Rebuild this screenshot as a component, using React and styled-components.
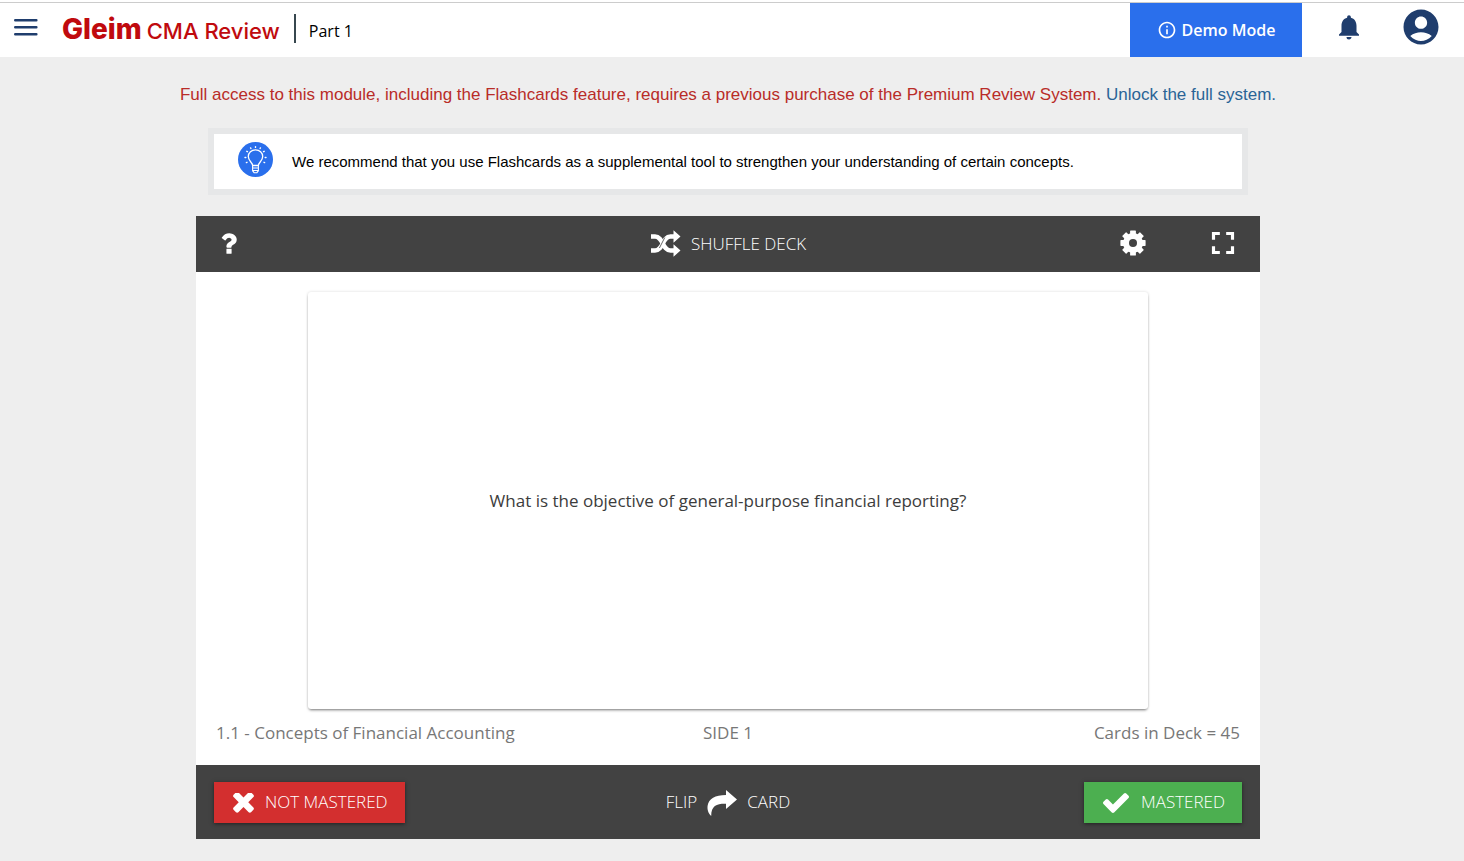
import React from 'react';
import styled, { createGlobalStyle } from 'styled-components';
import { MdNotifications, MdAccountCircle, MdInfoOutline, MdFullscreen } from 'react-icons/md';

const NAVY = '#1f3d6d';

const MenuIcon = () => (
    <svg width="24" height="18" viewBox="0 0 24 18" stroke={NAVY} strokeWidth="2.4" strokeLinecap="round">
        <path d="M1.2 2.2h21.200M1.2 9.2h21.200M1.2 16.2h21.200" />
    </svg>
);

const BulbIcon = () => (
    <svg width="35" height="35" viewBox="0 0 35 35" fill="none" stroke="#fff" strokeLinecap="round">
        <circle cx="17.5" cy="17.5" r="17.5" fill="#2a6fec" stroke="none" />
        <path d="M14.6 23.5c0-3-4.3-4.4-4.3-9 0-4 3.2-6.7 7.2-6.7s7.2 2.7 7.2 6.7c0 4.6-4.3 6-4.3 9z" strokeWidth="1.3" strokeLinejoin="round" />
        <path d="M14.6 23.5v5.2l1.5 2h2.8l1.5-2v-5.2M14.6 26h5.8M14.6 28.5h5.8" strokeWidth="1.1" />
        <path d="M17.5 4.6v.8M12.6 5.9l.3.6M22.4 5.9l-.3.6M8.8 9.3l.6.4M26.2 9.3l-.6.4M7 15.5h.8M27.2 15.5h.8M8.4 20.6l.6-.3M26.6 20.6l-.6-.3" strokeWidth="1.4" />
    </svg>
);

const QuestionIcon = () => (
    <svg width="29" height="29" viewBox="0 0 1792 1792" fill="#fff">
        <path d="M1088 1256v240q0 16-12 28t-28 12h-240q-16 0-28-12t-12-28v-240q0-16 12-28t28-12h240q16 0 28 12t12 28zm316-600q0 54-15.5 101t-35 76.5-55 59.5-57.5 43.5-61 35.5q-41 23-68.5 65t-27.5 67q0 17-12 32.5t-28 15.5h-240q-15 0-25.5-18.5t-10.5-37.5v-45q0-83 65-156.5t143-108.5q59-27 84-56t25-76q0-42-46.5-74t-107.5-32q-65 0-108 29-35 25-107 115-13 16-31 16-12 0-25-8l-164-125q-13-10-15.5-25t5.5-28q160-266 464-266 80 0 161 31t146 83 106 127.5 41 158.5z" />
    </svg>
);

const ShuffleIcon = () => (
    <svg width="31" height="27" viewBox="0 0 31 27" fill="none" stroke="#fff" strokeWidth="4.4">
        <path d="M1 20.500h4c8.500 0 7-14 15.500-14H25" />
        <path d="M1 6.500h4c8.500 0 7 14 15.500 14H25" />
        <path d="M23.500 0.200L30.500 6.500 23.500 12.800zM23.500 14.200L30.500 20.500 23.500 26.800z" fill="#fff" stroke="none" />
        <path d="M14.800 7.500L9.400 18" stroke="#424242" strokeWidth="0.800" />
    </svg>
);

const GearIcon = () => (
    <svg width="26" height="26" viewBox="-13 -13 26 26" fill="#fff">
        {[0, 45, 90, 135].map((angle) => (
            <rect key={angle} x="-2.9" y="-12.6" width="5.8" height="25.2" rx="0.6" transform={`rotate(${angle})`} />
        ))}
        <circle r="10" />
        <circle r="4" fill="#424242" />
    </svg>
);

const FlipIcon = () => (
    <svg width="30" height="26" viewBox="0 0 30 26" fill="#fff">
        <path d="M19 0L30 9.5 19 19V13.8C10 13.6 4.2 15.5 4.2 26 .8 22.8 .2 19 .6 15.8 1.8 8.5 8 4.9 19 4.9z" />
    </svg>
);

const CrossIcon = () => (
    <svg width="21" height="21" viewBox="296 304 1200 1200" fill="#fff">
        <path d="M1490 1194q0 40-28 68l-136 136q-28 28-68 28t-68-28l-294-294-294 294q-28 28-68 28t-68-28l-136-136q-28-28-28-68t28-68l294-294-294-294q-28-28-28-68t28-68l136-136q28-28 68-28t68 28l294 294 294-294q28-28 68-28t68 28l136 136q28 28 28 68t-28 68l-294 294 294 294q28 28 28 68z" />
    </svg>
);

const CheckIcon = () => (
    <svg width="26" height="20" viewBox="121 334 1550 1190" fill="#fff">
        <path d="M1671 566q0 40-28 68l-724 724-136 136q-28 28-68 28t-68-28l-136-136-362-362q-28-28-28-68t28-68l136-136q28-28 68-28t68 28l294 295 656-657q28-28 68-28t68 28l136 136q28 28 28 68z" />
    </svg>
);

export default function App() {
    return (
        <>
            <GlobalStyle />
            <Header>
                <HeaderButton aria-label="Menu"><MenuIcon /></HeaderButton>
                <Logo href="#">
                    <LogoName>Gleim</LogoName>
                    <LogoCourse>CMA Review</LogoCourse>
                </Logo>
                <PartName>Part 1</PartName>
                <DemoButton><MdInfoOutline size={20} />Demo Mode</DemoButton>
                <HeaderActions>
                    <HeaderButton aria-label="Notifications"><MdNotifications size={30} /></HeaderButton>
                    <HeaderButton aria-label="Account"><MdAccountCircle size={42} /></HeaderButton>
                </HeaderActions>
            </Header>
            <Main>
                <AccessNote>
                    Full access to this module, including the Flashcards feature, requires a previous purchase of the Premium Review System.
                    {' '}<a href="#">Unlock the full system.</a>
                </AccessNote>
                <Tip>
                    <BulbIcon />
                    <p>We recommend that you use Flashcards as a supplemental tool to strengthen your understanding of certain concepts.</p>
                </Tip>
                <Deck>
                    <Toolbar>
                        <ToolGroup>
                            <IconButton aria-label="Help"><QuestionIcon /></IconButton>
                        </ToolGroup>
                        <BarButton $gap="10px"><ShuffleIcon />SHUFFLE DECK</BarButton>
                        <ToolGroup $end>
                            <IconButton aria-label="Settings"><GearIcon /></IconButton>
                            <IconButton aria-label="Full screen"><MdFullscreen size={38} /></IconButton>
                        </ToolGroup>
                    </Toolbar>
                    <Flashcard>What is the objective of general-purpose financial reporting?</Flashcard>
                    <DeckInfo>
                        <span>1.1 - Concepts of Financial Accounting</span>
                        <span>SIDE 1</span>
                        <span>Cards in Deck = 45</span>
                    </DeckInfo>
                    <Footer>
                        <MarkButton $color="#d32f2f" $gap="11px"><CrossIcon />NOT MASTERED</MarkButton>
                        <BarButton $gap="10px">FLIP<FlipIcon />CARD</BarButton>
                        <MarkButton $color="#4caf50" $gap="12px"><CheckIcon />MASTERED</MarkButton>
                    </Footer>
                </Deck>
            </Main>
        </>
    );
}

const GlobalStyle = createGlobalStyle`
    * {
        box-sizing: border-box;
    }
    body {
        margin: 0;
        background: #eee;
        font-family: "Open Sans", "Noto Sans", sans-serif;
    }
    button {
        padding: 0;
        border: 0;
        background: none;
        color: inherit;
        font: inherit;
        cursor: pointer;
    }
    svg {
        display: block;
        flex-shrink: 0;
    }
    p {
        margin: 0;
    }
`;

const IconButton = styled.button`
    display: flex;
    align-items: center;
    justify-content: center;
`;

const HeaderButton = styled(IconButton)`
    && {
        padding-bottom: 3px;
    }
`;

const Header = styled.header`
    display: flex;
    align-items: center;
    height: 57px;
    padding: 0 22px 0 14px;
    background: linear-gradient(#fff 2px, #ccc 2px, #ccc 3px, #fff 3px);
    color: ${NAVY};
`;

const Logo = styled.a`
    display: flex;
    align-items: baseline;
    gap: 5px;
    margin-left: 24px;
    padding-top: 1px;
    color: #c00a0e;
    font-family: Inter, sans-serif;
    text-decoration: none;
    white-space: nowrap;
`;

const LogoName = styled.span`
    font-size: 28px;
    line-height: 36px;
    font-weight: 800;
`;

const LogoCourse = styled.span`
    font-size: 22px;
    font-weight: 500;
`;

const PartName = styled.span`
    display: flex;
    align-items: center;
    height: 29px;
    margin-left: 14px;
    padding: 4px 0 0 13px;
    border-left: 2px solid #37474f;
    color: #000;
    font-size: 16px;
    font-weight: 500;
    white-space: nowrap;
`;

const DemoButton = styled.button`
    display: flex;
    align-items: center;
    justify-content: center;
    gap: 5px;
    align-self: flex-end;
    width: 172px;
    height: 54px;
    margin-left: auto;
    && {
        background: #2a6fec;
        color: #fff;
        font-weight: 600;
    }
`;

const HeaderActions = styled.div`
    display: flex;
    align-items: center;
    gap: 36px;
    margin-left: 32px;
`;

const Main = styled.main`
    padding: 28px 8px 22px 0;
`;

const AccessNote = styled.p`
    color: #b92c28;
    font-family: "Liberation Sans", Arial, sans-serif;
    font-size: 17px;
    line-height: 20px;
    text-align: center;
    a {
        color: #2a6496;
        text-decoration: none;
    }
`;

const Tip = styled.div`
    display: flex;
    align-items: center;
    gap: 19px;
    max-width: 1040px;
    min-height: 67px;
    margin: 23px auto 21px;
    padding: 2px 24px 6px;
    border: 6px solid #e6e7e8;
    background: #fff;
    color: #000;
    font-family: "Liberation Sans", Arial, sans-serif;
    font-size: 15px;
    p {
        padding-top: 4px;
    }
`;

const Deck = styled.section`
    max-width: 1064px;
    margin: 0 auto;
    background: #fff;
    font-size: 17px;
`;

const Toolbar = styled.div`
    display: grid;
    grid-template-columns: 1fr auto 1fr;
    align-items: center;
    min-height: 56px;
    padding: 0 18px 2px;
    background: #424242;
    color: #fff;
`;

const ToolGroup = styled.div`
    display: flex;
    align-items: center;
    justify-content: ${(props) => (props.$end ? 'flex-end' : 'flex-start')};
    gap: 58px;
`;

const BarButton = styled.button`
    display: flex;
    align-items: center;
    justify-content: center;
    gap: ${(props) => props.$gap};
    && {
        font-size: 17px;
        font-weight: 300;
    }
`;

const Flashcard = styled.div`
    display: flex;
    align-items: center;
    justify-content: center;
    max-width: 840px;
    min-height: 417px;
    margin: 20px auto 0;
    border-radius: 3px;
    background: #fff;
    box-shadow: 0 2px 3px -1px rgba(0, 0, 0, .5), 0 0 3px rgba(0, 0, 0, .15);
    color: #3c3c3c;
`;

const DeckInfo = styled.div`
    display: grid;
    grid-template-columns: 1fr auto 1fr;
    padding: 12px 20px 20px;
    color: #777;
    line-height: 24px;
    span:last-child {
        text-align: right;
    }
`;

const Footer = styled.div`
    display: grid;
    grid-template-columns: 1fr auto 1fr;
    align-items: center;
    min-height: 74px;
    padding: 0 18px;
    background: #424242;
    color: #fff;
    button {
        padding-bottom: 2px;
    }
    button:last-child {
        justify-self: end;
    }
    svg {
        margin-top: 4px;
    }
`;

const MarkButton = styled(BarButton)`
    justify-self: start;
    height: 41px;
    && {
        padding: 0 17px 2px 19px;
        background: ${(props) => props.$color};
        box-shadow: 0 1px 4px rgba(0, 0, 0, .5);
    }
`;
